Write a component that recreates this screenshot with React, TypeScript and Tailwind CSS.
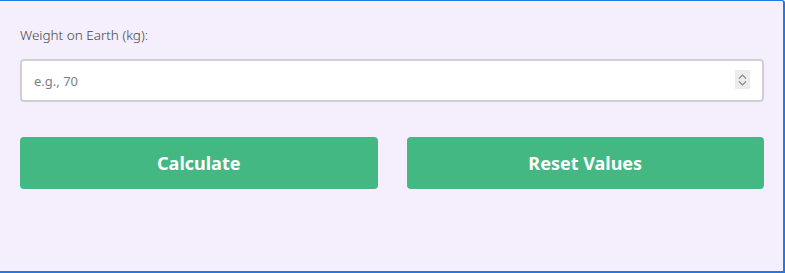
import { useState } from "react";

// Calculateur de poids : un champ, deux boutons.

const font = { fontFamily: '"Noto Sans", "Open Sans", sans-serif' };

export default function App() {
  const [poids, setPoids] = useState("");

  return (
    <div
      style={font}
      className="h-[273px] w-[785px] overflow-hidden rounded-tr-[3px] border-b-2 border-r-2 border-t border-[#1f7ae8] bg-[#f4eefd] pl-[20px] pr-[19px] pt-[24px]"
    >
      <label className="block">
        <span className="block text-[13.5px] font-light text-[#444]">
          Weight on Earth (kg):
        </span>
        <div className="relative mt-[14px]">
          <input
            type="text"
            value={poids}
            onChange={(e) => setPoids(e.target.value)}
            placeholder="e.g., 70"
            className="h-[43px] w-full rounded-[4px] border-2 border-[#cfcfd4] bg-white px-[12px] text-[13px] text-[#333] placeholder:text-[#7d7d86] focus:outline-none"
          />
          <span className="pointer-events-none absolute right-[14px] top-[11px] flex h-[19px] w-[15px] flex-col items-center justify-center bg-[#ececec]">
            <svg width="9" height="14" viewBox="0 0 9 14" fill="none" stroke="#8a8a8a" strokeWidth="1.2">
              <path d="M1 5.5 L4.5 2 L8 5.5" />
              <path d="M1 8.5 L4.5 12 L8 8.5" />
            </svg>
          </span>
        </div>
      </label>

      <div className="mt-[35px] grid grid-cols-2 gap-[29px]">
        <button
          type="button"
          className="h-[52px] rounded-[4px] bg-[#43b883] text-[18px] font-bold text-white"
        >
          Calculate
        </button>
        <button
          type="button"
          onClick={() => setPoids("")}
          className="h-[52px] rounded-[4px] bg-[#43b883] text-[18px] font-bold text-white"
        >
          Reset Values
        </button>
      </div>
    </div>
  );
}
